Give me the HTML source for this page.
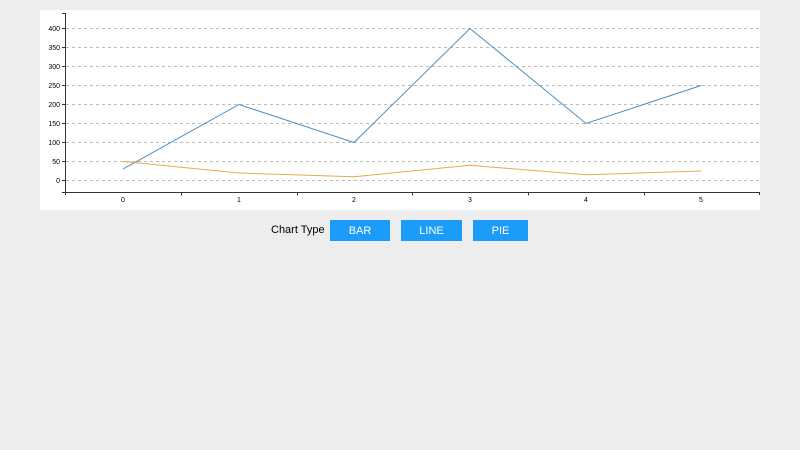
<!DOCTYPE html>
<html><head><style>
body{margin:0;background:#ededed;width:800px;height:450px;font-family:"Liberation Sans",sans-serif;position:relative;overflow:hidden}
.chart{position:absolute;left:40px;top:10px;width:720px;height:200px;background:#fff}
.lbl{position:absolute;left:271px;top:224px;font-size:11px;color:#000}
.btn{position:absolute;top:220px;height:21px;background:#1a9cf8;color:#fff;font-size:11px;line-height:22px;text-align:center}
</style></head><body>
<div class="chart"></div>
<svg style="position:absolute;left:0;top:0" width="800" height="450" font-family="Liberation Sans" font-size="7">
<g stroke="#bbb" stroke-dasharray="3,3" stroke-width="1">
<line x1="66" x2="759" y1="180.5" y2="180.5"/><line x1="66" x2="759" y1="161.5" y2="161.5"/>
<line x1="66" x2="759" y1="142.5" y2="142.5"/><line x1="66" x2="759" y1="123.5" y2="123.5"/>
<line x1="66" x2="759" y1="104.5" y2="104.5"/><line x1="66" x2="759" y1="85.5" y2="85.5"/>
<line x1="66" x2="759" y1="66.5" y2="66.5"/><line x1="66" x2="759" y1="47.5" y2="47.5"/>
<line x1="66" x2="759" y1="28.5" y2="28.5"/>
</g>
<g stroke="#333" stroke-width="1" fill="none">
<path d="M62 13.5H65.5V192.5H62"/>
<path d="M65.5 195V192.5H759.5V195"/>
<path d="M181.5 192.5v3M297.5 192.5v3M412.5 192.5v3M528.5 192.5v3M644.5 192.5v3"/>
<path d="M62 180.5h3M62 161.5h3M62 142.5h3M62 123.5h3M62 104.5h3M62 85.5h3M62 66.5h3M62 47.5h3M62 28.5h3"/>
</g>
<g text-anchor="end" fill="#000">
<text x="60" y="183">0</text><text x="60" y="164">50</text><text x="60" y="145">100</text>
<text x="60" y="126">150</text><text x="60" y="107">200</text><text x="60" y="88">250</text>
<text x="60" y="69">300</text><text x="60" y="50">350</text><text x="60" y="31">400</text>
</g>
<g text-anchor="middle" fill="#000">
<text x="123" y="202">0</text><text x="239" y="202">1</text><text x="354" y="202">2</text>
<text x="470" y="202">3</text><text x="586" y="202">4</text><text x="701" y="202">5</text>
</g>
<polyline fill="none" stroke="#4a8ec0" stroke-width="1" points="123,169 239,104.5 354,142.5 470,28.5 586,123.5 701,85.5"/>
<polyline fill="none" stroke="#e8a850" stroke-width="1" points="123,161.5 239,173 354,176.7 470,165.3 586,174.8 701,171"/>
</svg>
<div class="lbl">Chart Type</div>
<div class="btn" style="left:330px;width:60px">BAR</div>
<div class="btn" style="left:401px;width:61px">LINE</div>
<div class="btn" style="left:473px;width:55px">PIE</div>
</body></html>
